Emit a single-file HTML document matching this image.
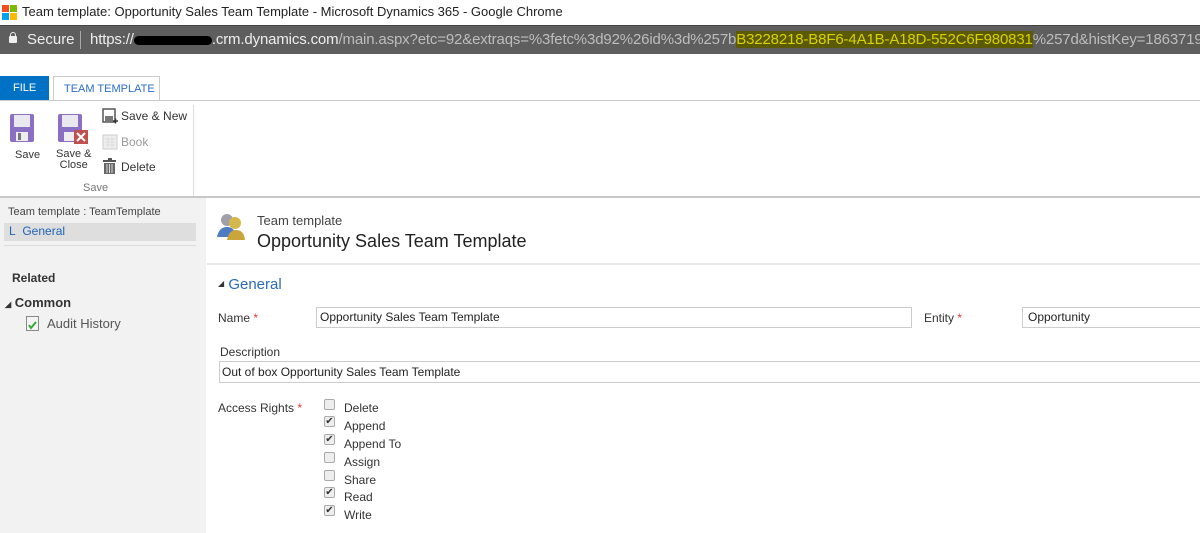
<!DOCTYPE html>
<html><head><style>
*{margin:0;padding:0;box-sizing:border-box}
body{width:1200px;height:533px;overflow:hidden;background:#fff;font-family:"Liberation Sans",sans-serif;position:relative;color:#333}
.a{position:absolute;white-space:nowrap}
.cb{position:absolute;left:324px;width:11px;height:11px;border:1px solid #aaa;background:#eee;border-radius:2px;font-size:10px;line-height:9px;text-align:center;color:#333}
.cl{position:absolute;left:344px;font-size:12px;color:#333}
</style></head><body>
<div class="a" style="left:2px;top:5px;width:7px;height:7px;background:#f25022"></div>
<div class="a" style="left:10px;top:5px;width:7px;height:7px;background:#7fba00"></div>
<div class="a" style="left:2px;top:13px;width:7px;height:7px;background:#00a4ef"></div>
<div class="a" style="left:10px;top:13px;width:7px;height:7px;background:#ffb900"></div>
<div class="a" style="left:22px;top:4px;font-size:13px;color:#222">Team template: Opportunity Sales Team Template - Microsoft Dynamics 365 - Google Chrome</div>
<div class="a" style="left:0;top:25px;width:1200px;height:29px;background:#5e5e5e;border-top:1px solid #444"></div>
<div class="a" style="left:9px;top:36px;width:8px;height:7px;background:#eee;border-radius:1px"></div>
<div class="a" style="left:10px;top:32px;width:6px;height:6px;border:1.5px solid #eee;border-bottom:none;border-radius:3px 3px 0 0"></div>
<div class="a" style="left:27px;top:31px;font-size:15px;color:#eee">Secure</div>
<div class="a" style="left:80px;top:31px;width:1px;height:18px;background:#aaa"></div>
<div class="a" style="left:90px;top:31px;font-size:15px;color:#eee;letter-spacing:-0.15px">https://<span style="display:inline-block;width:78px;height:9px;background:#000;border-radius:5px;vertical-align:middle"></span>.crm.dynamics.com<span style="color:#bdbdbd">/main.aspx?etc=92&amp;extraqs=%3fetc%3d92%26id%3d%257b<span style="background:#5c5a00;color:#d8d100">B3228218-B8F6-4A1B-A18D-552C6F980831</span>%257d&amp;histKey=1863719</span></div>
<div class="a" style="left:0;top:76px;width:49px;height:25px;background:#0072c6;color:#fff;font-size:11px;line-height:25px;padding-left:13px">FILE</div>
<div class="a" style="left:53px;top:76px;width:107px;height:25px;border:1px solid #ccc;border-bottom:none;background:#fff;color:#2b6ec4;font-size:11px;line-height:25px;padding-left:10px">TEAM TEMPLATE</div>
<div class="a" style="left:0;top:100px;width:1200px;height:1px;background:#ccc"></div>
<svg class="a" style="left:9px;top:113px" width="26" height="30"><rect x="1" y="1" width="24" height="28" rx="2" fill="#8a6fc4"/><rect x="5" y="2" width="16" height="12" fill="#e8e8ee"/><rect x="7" y="19" width="12" height="9" fill="#eee"/><rect x="9" y="20" width="3" height="7" fill="#777"/></svg>
<div class="a" style="left:15px;top:149px;font-size:11px">Save</div>
<svg class="a" style="left:57px;top:113px" width="34" height="32"><rect x="1" y="1" width="24" height="28" rx="2" fill="#8a6fc4"/><rect x="5" y="2" width="16" height="12" fill="#e8e8ee"/><rect x="7" y="19" width="12" height="9" fill="#eee"/><rect x="17" y="17" width="14" height="14" fill="#c0504d"/><path d="M20 20l8 8M28 20l-8 8" stroke="#fff" stroke-width="2"/></svg>
<div class="a" style="left:56px;top:149px;font-size:11px;text-align:center;line-height:11px">Save &amp;<br>Close</div>
<svg class="a" style="left:102px;top:108px" width="16" height="16"><rect x="1" y="1" width="12" height="13" fill="none" stroke="#555" stroke-width="1.5"/><rect x="3" y="8" width="8" height="6" fill="#777"/><path d="M11 13h5M13.5 10.5v5" stroke="#333" stroke-width="1.5"/></svg>
<div class="a" style="left:121px;top:109px;font-size:12px">Save &amp; New</div>
<svg class="a" style="left:102px;top:134px" width="16" height="16"><rect x="1" y="1" width="14" height="14" fill="#eee" stroke="#ccc"/><path d="M3 5h10M3 8h10M3 11h10M6 3v10M10 3v10" stroke="#ddd"/></svg>
<div class="a" style="left:121px;top:135px;font-size:12px;color:#999">Book</div>
<svg class="a" style="left:102px;top:158px" width="16" height="17"><rect x="1" y="2" width="13" height="2" fill="#555"/><rect x="6" y="0" width="4" height="2" fill="#555"/><rect x="2" y="5" width="11" height="11" fill="#666"/><path d="M5 6v9M7.5 6v9M10 6v9" stroke="#ddd"/></svg>
<div class="a" style="left:121px;top:160px;font-size:12px">Delete</div>
<div class="a" style="left:83px;top:182px;font-size:11px;color:#777">Save</div>
<div class="a" style="left:193px;top:105px;width:1px;height:92px;background:#ddd"></div>
<div class="a" style="left:0;top:196px;width:1200px;height:2px;background:#c8c8c8"></div>
<div class="a" style="left:0;top:198px;width:206px;height:335px;background:#f2f2f2"></div>
<div class="a" style="left:8px;top:206px;font-size:11px;color:#444">Team template : TeamTemplate</div>
<div class="a" style="left:4px;top:223px;width:192px;height:18px;background:#dedede"></div>
<div class="a" style="left:9px;top:224px;font-size:12px;color:#1f63b5">L&nbsp; General</div>
<div class="a" style="left:4px;top:245px;width:192px;height:1px;background:#ddd"></div>
<div class="a" style="left:12px;top:271px;font-size:12px;font-weight:bold;color:#333">Related</div>
<div class="a" style="left:5px;top:295px;font-size:13px;font-weight:bold;color:#333"><span style="font-size:8px">◢</span> Common</div>
<svg class="a" style="left:26px;top:316px" width="13" height="15"><rect x="0.5" y="0.5" width="12" height="14" fill="#f4f4f4" stroke="#888"/><path d="M3 9l2 3 5-6" stroke="#3a3" stroke-width="2" fill="none"/></svg>
<div class="a" style="left:47px;top:316px;font-size:13px;color:#555">Audit History</div>
<svg class="a" style="left:216px;top:211px" width="30" height="30"><circle cx="11" cy="9" r="6" fill="#a0a0a8"/><circle cx="19" cy="12" r="6" fill="#d6b84a"/><path d="M1 26q2-10 10-10q8 0 9 10z" fill="#4d7bc4"/><path d="M11 29q2-10 9-10q8 0 9 10z" fill="#c9a53a"/></svg>
<div class="a" style="left:257px;top:213px;font-size:13px;color:#444">Team template</div>
<div class="a" style="left:257px;top:231px;font-size:18px;color:#222">Opportunity Sales Team Template</div>
<div class="a" style="left:207px;top:263px;width:993px;height:2px;background:#e6e6e6"></div>
<div class="a" style="left:218px;top:276px;font-size:15px;color:#2a6ab9"><span style="font-size:8px;color:#333;vertical-align:3px">◢</span> General</div>
<div class="a" style="left:218px;top:311px;font-size:12px">Name<span style="color:#e03c31"> *</span></div>
<div class="a" style="left:316px;top:307px;width:596px;height:21px;border:1px solid #ccc;font-size:12px;line-height:19px;padding-left:3px;color:#222">Opportunity Sales Team Template</div>
<div class="a" style="left:924px;top:311px;font-size:12px">Entity<span style="color:#e03c31"> *</span></div>
<div class="a" style="left:1022px;top:307px;width:190px;height:21px;border:1px solid #ccc;font-size:12px;line-height:19px;padding-left:5px;color:#222">Opportunity</div>
<div class="a" style="left:220px;top:345px;font-size:12px">Description</div>
<div class="a" style="left:219px;top:361px;width:990px;height:22px;border:1px solid #ccc;font-size:12px;line-height:20px;padding-left:2px;color:#222">Out of box Opportunity Sales Team Template</div>
<div class="a" style="left:218px;top:401px;font-size:12px">Access Rights<span style="color:#e03c31"> *</span></div>
<div class="cb" style="top:399px"></div><div class="cl" style="top:401px">Delete</div>
<div class="cb" style="top:416px">✔</div><div class="cl" style="top:419px">Append</div>
<div class="cb" style="top:434px">✔</div><div class="cl" style="top:437px">Append To</div>
<div class="cb" style="top:452px"></div><div class="cl" style="top:455px">Assign</div>
<div class="cb" style="top:470px"></div><div class="cl" style="top:473px">Share</div>
<div class="cb" style="top:487px">✔</div><div class="cl" style="top:490px">Read</div>
<div class="cb" style="top:505px">✔</div><div class="cl" style="top:508px">Write</div>
</body></html>
